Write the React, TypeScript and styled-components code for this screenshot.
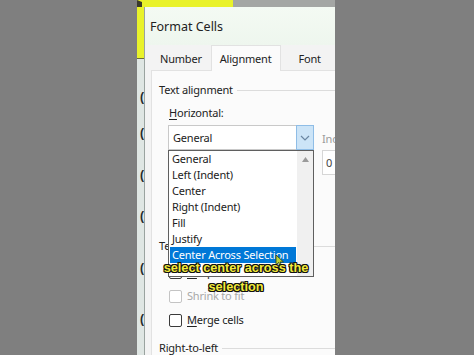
import styled, { createGlobalStyle } from 'styled-components';

const GlobalStyle = createGlobalStyle`
  html, body {
    margin: 0;
    padding: 0;
    background: #7f7f7f;
  }
  * {
    box-sizing: border-box;
  }
`;

const Page = styled.div`
  display: flex;
  width: 474px;
  height: 355px;
  overflow: hidden;
  background: #7f7f7f;
  font-family: 'Noto Sans', 'Open Sans', sans-serif;
  color: #222;
`;

const SideBar = styled.div<{ $w?: number }>`
  flex: ${(p) => (p.$w ? `0 0 ${p.$w}px` : '1')};
  background: #7f7f7f;
`;

const Stage = styled.div`
  position: relative;
  flex: 0 0 198px;
  display: flex;
  flex-direction: column;
  overflow: hidden;
  background: #dfe5e2;
`;

const TopBand = styled.div`
  display: flex;
  height: 7px;
  flex: 0 0 7px;
`;

const YellowCell = styled.div`
  width: 96px;
  background: #e9f22a;
  border-left: 5px solid #3a3a2a;
  border-top: 2px solid #e9f22a;
`;

const GrayRest = styled.div`
  flex: 1;
  background: #a4a6a4;
`;

const Body = styled.div`
  flex: 1;
  display: flex;
  min-height: 0;
`;

const SheetStrip = styled.div`
  width: 8px;
  display: flex;
  flex-direction: column;
  background: #dfe6e3;
  border-right: 1px solid #9aa39f;
`;

const SheetYellow = styled.div`
  height: 53px;
  background: #e9f22a;
  border-bottom: 1px solid #6b6b3a;
`;

const SheetRow = styled.div<{ $h: number }>`
  height: ${(p) => p.$h}px;
  display: flex;
  align-items: center;
  justify-content: flex-end;
  font-family: 'Liberation Sans', sans-serif;
  font-size: 12px;
  font-weight: bold;
  color: #1f2a2a;
  overflow: hidden;
`;

const Dialog = styled.div`
  flex: 1;
  display: flex;
  flex-direction: column;
  background: #f3f3f3;
  min-width: 0;
  font-size: 11px;
  letter-spacing: -0.2px;
`;

const TitleBar = styled.div`
  height: 38px;
  flex: 0 0 38px;
  display: flex;
  align-items: center;
  padding-left: 5px;
  font-size: 12.5px;
  letter-spacing: 0;
  background: linear-gradient(180deg, #f4faf3, #eef6ee);
  white-space: nowrap;
`;

const TabRow = styled.div`
  height: 25px;
  flex: 0 0 25px;
  display: flex;
  padding-left: 6px;
`;

const Tab = styled.div<{ $active?: boolean; $pl?: number }>`
  display: flex;
  align-items: center;
  padding: 0 8px 0 ${(p) => p.$pl ?? 8}px;
  white-space: nowrap;
  background: ${(p) => (p.$active ? '#fbfbfb' : 'transparent')};
  border: 1px solid ${(p) => (p.$active ? '#e2e2e2' : 'transparent')};
  border-bottom: none;
  margin-bottom: -1px;
  position: relative;
  z-index: 1;
`;

const Panel = styled.div`
  position: relative;
  flex: 1;
  margin-left: 6px;
  background: #fbfbfb;
  border: 1px solid #e2e2e2;
  border-right: none;
  border-bottom: none;
  line-height: 16px;
  white-space: nowrap;
`;

const GroupHeader = styled.div<{ $mt: number }>`
  display: flex;
  align-items: center;
  gap: 4px;
  margin-top: ${(p) => p.$mt}px;
  padding-left: 7px;

  &::after {
    content: '';
    flex: 1;
    height: 1px;
    background: #dcdcdc;
  }
`;

const FieldLabel = styled.div<{ $mt: number }>`
  margin-top: ${(p) => p.$mt}px;
  padding-left: 17px;
`;

const Key = styled.span`
  text-decoration: underline;
  text-underline-offset: 2px;
`;

const ComboRow = styled.div`
  display: flex;
  gap: 8px;
  margin-top: 4px;
  padding-left: 16px;
  height: 50px;
`;

const ComboWrap = styled.div`
  position: relative;
  width: 146px;
  height: 25px;
`;

const Combo = styled.div`
  display: flex;
  align-items: center;
  width: 146px;
  height: 25px;
  background: #fff;
  border: 1px solid #c9c9c9;
  padding-left: 4px;
`;

const ComboValue = styled.div`
  flex: 1;
`;

const DropButton = styled.div`
  width: 18px;
  height: 25px;
  margin: -1px -1px -1px 0;
  display: flex;
  align-items: center;
  justify-content: center;
  background: #cce4f7;
  border: 1px solid #8fbde6;
`;

const DropList = styled.div`
  position: absolute;
  top: 25px;
  left: 0;
  width: 146px;
  height: 127px;
  display: flex;
  background: #fff;
  border: 1px solid #5f5f5f;
  overflow: hidden;
  z-index: 2;
`;

const Items = styled.div`
  flex: 1;
  padding: 0 1px;
`;

const Item = styled.div<{ $selected?: boolean }>`
  height: 16px;
  line-height: 16px;
  padding-left: 2px;
  background: ${(p) => (p.$selected ? '#0078d7' : 'transparent')};
  color: ${(p) => (p.$selected ? '#fff' : '#222')};
`;

const ScrollTrack = styled.div`
  width: 16px;
  background: #f0f0f0;
  display: flex;
  justify-content: center;
  padding-top: 6px;
`;

const IndentCol = styled.div`
  display: flex;
  flex-direction: column;
  padding-top: 6px;
  color: #9a9a9a;
`;

const IndentInput = styled.div`
  margin-top: 3px;
  width: 40px;
  height: 25px;
  border: 1px solid #d6d6d6;
  background: #fff;
  color: #444;
  display: flex;
  align-items: center;
  padding-left: 3px;
`;

const CheckRow = styled.div<{ $mt?: number; $disabled?: boolean }>`
  display: flex;
  align-items: center;
  gap: 5px;
  height: 24px;
  margin-top: ${(p) => p.$mt ?? 0}px;
  padding-left: 17px;
  color: ${(p) => (p.$disabled ? '#a8a8a8' : '#222')};
`;

const Box = styled.span<{ $disabled?: boolean }>`
  width: 13px;
  height: 13px;
  border: 1px solid ${(p) => (p.$disabled ? '#c4c4c4' : '#3a3a3a')};
  border-radius: 2px;
  background: #fff;
`;

const Caption = styled.div`
  position: absolute;
  left: 0;
  right: 0;
  top: 259px;
  text-align: center;
  font-family: 'Liberation Sans', Arial, sans-serif;
  font-weight: bold;
  font-size: 12.7px;
  line-height: 19px;
  color: #f2e93a;
  z-index: 5;
  text-shadow: -1px -1px 0 #111, 1px -1px 0 #111, -1px 1px 0 #111, 1px 1px 0 #111,
    0 1px 0 #111, 0 -1px 0 #111, 1px 0 0 #111, -1px 0 0 #111;
`;

const Pointer = styled.svg`
  position: absolute;
  left: 138px;
  top: 254px;
  z-index: 4;
`;

const sheetRows = [
  { h: 21, mark: '' },
  { h: 38, mark: '(' },
  { h: 36, mark: '(' },
  { h: 50, mark: '(' },
  { h: 34, mark: '(' },
  { h: 72, mark: '(' },
  { h: 34, mark: '(' },
  { h: 20, mark: '' },
];

const options = [
  'General',
  'Left (Indent)',
  'Center',
  'Right (Indent)',
  'Fill',
  'Justify',
  'Center Across Selection',
];

export default function App() {
  return (
    <>
      <GlobalStyle />
      <Page>
        <SideBar $w={137} />
        <Stage>
          <TopBand>
            <YellowCell />
            <GrayRest />
          </TopBand>
          <Body>
            <SheetStrip>
              <SheetYellow />
              {sheetRows.map((r, i) => (
                <SheetRow key={i} $h={r.h}>
                  {r.mark}
                </SheetRow>
              ))}
            </SheetStrip>
            <Dialog>
              <TitleBar>Format Cells</TitleBar>
              <TabRow>
                <Tab>Number</Tab>
                <Tab $active>Alignment</Tab>
                <Tab $pl={17}>Font</Tab>
              </TabRow>
              <Panel>
                <GroupHeader $mt={11}>Text alignment</GroupHeader>
                <FieldLabel $mt={7}>
                  <Key>H</Key>orizontal:
                </FieldLabel>
                <ComboRow>
                  <ComboWrap>
                    <Combo>
                      <ComboValue>General</ComboValue>
                      <DropButton>
                        <svg width="10" height="6" viewBox="0 0 10 6">
                          <polyline points="1,1 5,5 9,1" fill="none" stroke="#6b87a3" strokeWidth="1.2" />
                        </svg>
                      </DropButton>
                    </Combo>
                    <DropList>
                      <Items>
                        {options.map((o) => (
                          <Item key={o} $selected={o === 'Center Across Selection'}>
                            {o}
                          </Item>
                        ))}
                      </Items>
                      <ScrollTrack>
                        <svg width="7" height="5" viewBox="0 0 7 5">
                          <polygon points="0,5 3.5,0 7,5" fill="#9a9a9a" />
                        </svg>
                      </ScrollTrack>
                    </DropList>
                  </ComboWrap>
                  <IndentCol>
                    Indent:
                    <IndentInput>0</IndentInput>
                  </IndentCol>
                </ComboRow>
                <FieldLabel $mt={4}>
                  <Key>V</Key>ertical:
                </FieldLabel>
                <GroupHeader $mt={43}>Text control</GroupHeader>
                <CheckRow $mt={6}>
                  <Box />
                  <span>
                    <Key>W</Key>rap text
                  </span>
                </CheckRow>
                <CheckRow $disabled>
                  <Box $disabled />
                  <span>Shrink to fit</span>
                </CheckRow>
                <CheckRow>
                  <Box />
                  <span>
                    <Key>M</Key>erge cells
                  </span>
                </CheckRow>
                <GroupHeader $mt={8}>Right-to-left</GroupHeader>
              </Panel>
            </Dialog>
          </Body>
          <Pointer width="10" height="14" viewBox="0 0 10 14">
            <path d="M1 1 L1 11 L3.5 8.5 L5.5 13 L7 12.3 L5 8 L8.5 8 Z" fill="#b9d23a" stroke="#2a3a10" strokeWidth="0.8" />
          </Pointer>
          <Caption>
            select center across the
            <br />
            selection
          </Caption>
        </Stage>
        <SideBar />
      </Page>
    </>
  );
}
